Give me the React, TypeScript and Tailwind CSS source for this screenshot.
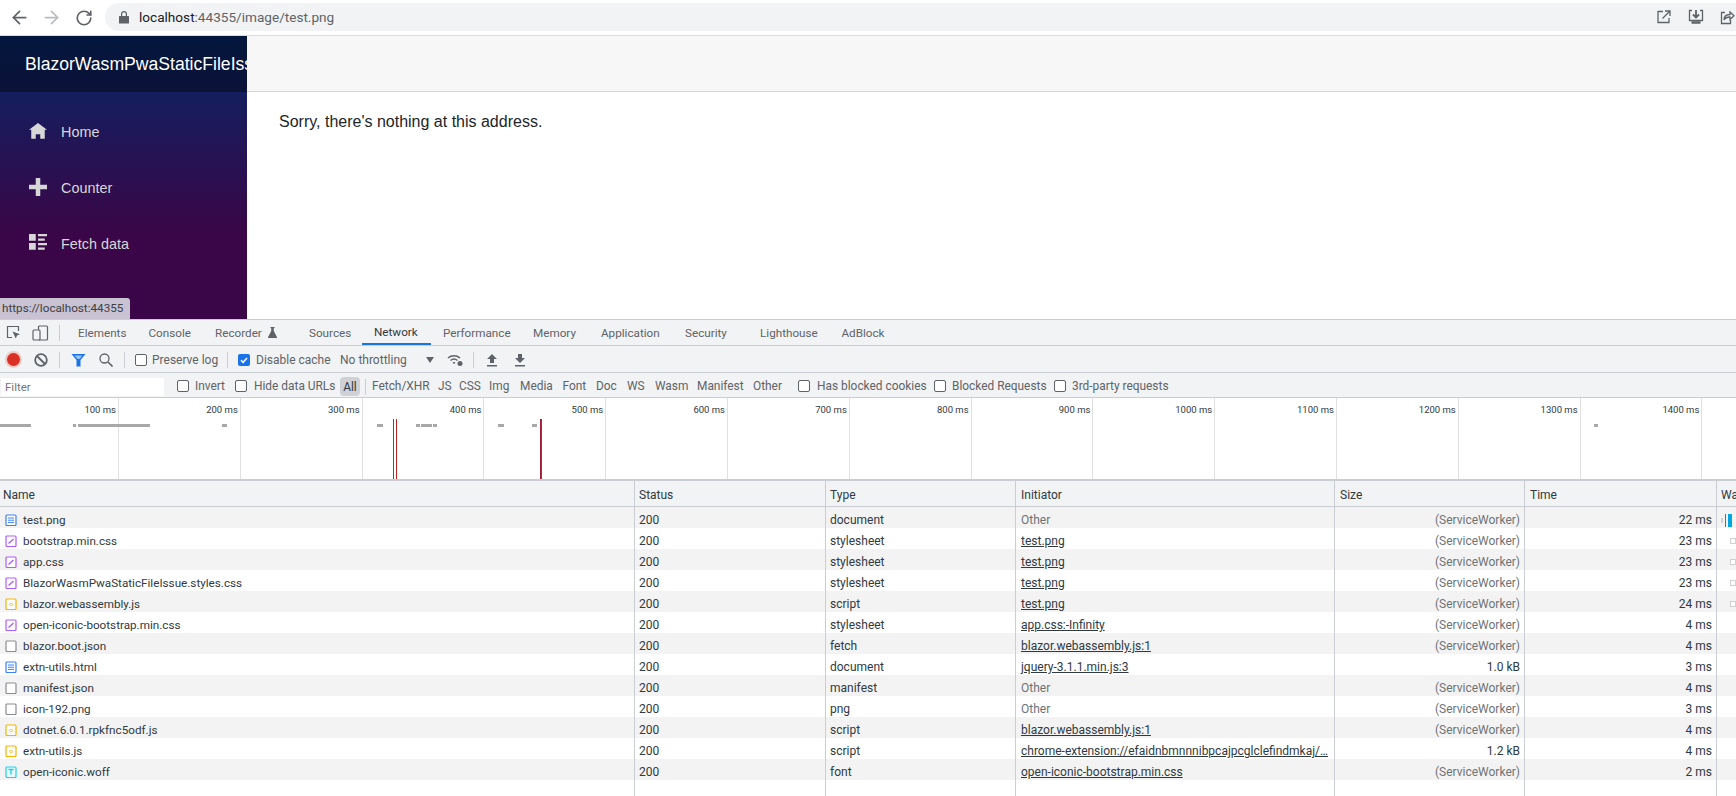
import { ArrowLeft, ArrowRight, RotateCw } from "lucide-react";

const UI_FONT = "font-['Roboto',sans-serif]";
const COLS = "grid grid-cols-[635px_191px_190px_319px_190px_192px_19px]";

type Kind = "doc" | "css" | "js" | "blank" | "font";

const REQUESTS: {
  name: string;
  kind: Kind;
  type: string;
  initiator: string;
  link: boolean;
  size: string;
  time: string;
}[] = [
  { name: "test.png", kind: "doc", type: "document", initiator: "Other", link: false, size: "(ServiceWorker)", time: "22 ms" },
  { name: "bootstrap.min.css", kind: "css", type: "stylesheet", initiator: "test.png", link: true, size: "(ServiceWorker)", time: "23 ms" },
  { name: "app.css", kind: "css", type: "stylesheet", initiator: "test.png", link: true, size: "(ServiceWorker)", time: "23 ms" },
  { name: "BlazorWasmPwaStaticFileIssue.styles.css", kind: "css", type: "stylesheet", initiator: "test.png", link: true, size: "(ServiceWorker)", time: "23 ms" },
  { name: "blazor.webassembly.js", kind: "js", type: "script", initiator: "test.png", link: true, size: "(ServiceWorker)", time: "24 ms" },
  { name: "open-iconic-bootstrap.min.css", kind: "css", type: "stylesheet", initiator: "app.css:-Infinity", link: true, size: "(ServiceWorker)", time: "4 ms" },
  { name: "blazor.boot.json", kind: "blank", type: "fetch", initiator: "blazor.webassembly.js:1", link: true, size: "(ServiceWorker)", time: "4 ms" },
  { name: "extn-utils.html", kind: "doc", type: "document", initiator: "jquery-3.1.1.min.js:3", link: true, size: "1.0 kB", time: "3 ms" },
  { name: "manifest.json", kind: "blank", type: "manifest", initiator: "Other", link: false, size: "(ServiceWorker)", time: "4 ms" },
  { name: "icon-192.png", kind: "blank", type: "png", initiator: "Other", link: false, size: "(ServiceWorker)", time: "3 ms" },
  { name: "dotnet.6.0.1.rpkfnc5odf.js", kind: "js", type: "script", initiator: "blazor.webassembly.js:1", link: true, size: "(ServiceWorker)", time: "4 ms" },
  { name: "extn-utils.js", kind: "js", type: "script", initiator: "chrome-extension://efaidnbmnnnibpcajpcglclefindmkaj/…", link: true, size: "1.2 kB", time: "4 ms" },
  { name: "open-iconic.woff", kind: "font", type: "font", initiator: "open-iconic-bootstrap.min.css", link: true, size: "(ServiceWorker)", time: "2 ms" },
];

const TABS = [
  { label: "Elements", width: "w-[70.500px]" },
  { label: "Console", width: "w-[66.500px]" },
  { label: "Recorder", width: "w-[94px]" },
  { label: "Sources", width: "w-[65px]" },
  { label: "Network", width: "w-[69px]" },
  { label: "Performance", width: "w-[90px]" },
  { label: "Memory", width: "w-[68px]" },
  { label: "Application", width: "w-[84px]" },
  { label: "Security", width: "w-[75px]" },
  { label: "Lighthouse", width: "w-[81.500px]" },
  { label: "AdBlock", width: "w-[80px]" },
];

const TICKS = ["100 ms", "200 ms", "300 ms", "400 ms", "500 ms", "600 ms", "700 ms", "800 ms", "900 ms", "1000 ms", "1100 ms", "1200 ms", "1300 ms", "1400 ms", ""];

function FileIcon({ kind }: { kind: Kind }) {
  const stroke = { doc: "#3b82f6", css: "#b45cf5", js: "#f5b400", blank: "#8a8d91", font: "#22cfe6" }[kind];
  return (
    <svg width="12" height="12" viewBox="0 0 12 12" className="shrink-0">
      <rect x="1" y="1" width="10" height="10.500" rx="1" fill={kind === "font" ? "#e6fafd" : "#fff"} stroke={stroke} strokeWidth="1.200" />
      {kind === "doc" && <path d="M3 4h6M3 6.200h6M3 8.400h6" stroke={stroke} />}
      {kind === "css" && <path d="M3.500 8.500l5-4.500" stroke={stroke} strokeWidth="1.400" />}
      {kind === "js" && <rect x="4.500" y="5.500" width="3" height="2" rx="1" fill="none" stroke={stroke} strokeWidth="0.800" />}
      {kind === "font" && <path d="M3.500 3.500h5M6 3.500v5" stroke={stroke} strokeWidth="1.400" />}
    </svg>
  );
}

function Check({ checked = false }: { checked?: boolean }) {
  if (checked) {
    return (
      <span className="w-3 h-3 rounded-[2px] bg-[#1a73e8] flex items-center justify-center shrink-0">
        <svg width="10" height="10" viewBox="0 0 10 10">
          <path d="M2 5.200l2.100 2.100L8 3" fill="none" stroke="#fff" strokeWidth="1.600" />
        </svg>
      </span>
    );
  }
  return <span className="w-3 h-3 rounded-[2px] border border-[#5f6368] bg-white shrink-0" />;
}

function Sep({ className }: { className: string }) {
  return (
    <span className={`flex justify-center shrink-0 ${className}`}>
      <span className="w-px h-4 bg-[#cacdd1]" />
    </span>
  );
}

function BrowserBar() {
  return (
    <div className="h-[36px] shrink-0 bg-white border-b border-[#dadce0] flex items-center">
      <div className="w-[105px] flex items-center shrink-0">
        <ArrowLeft size={21} strokeWidth={2} className="ml-[9px] text-[#5f6368]" />
        <ArrowRight size={21} strokeWidth={2} className="ml-[11px] text-[#babcbe]" />
        <RotateCw size={18} strokeWidth={2.200} className="ml-[13px] text-[#5f6368]" />
      </div>
      <div className="flex-1 h-[28px] mt-[-1px] rounded-l-full bg-[#f1f3f4] flex items-center">
        <svg width="12" height="14" viewBox="0 0 12 14" className="ml-[13px] text-[#5f6368]">
          <path d="M1.500 6h9a.5.5 0 0 1 .5.5V13a.5.5 0 0 1-.5.5h-9A.5.5 0 0 1 1 13V6.500A.5.5 0 0 1 1.500 6zM3 6V4a3 3 0 0 1 6 0v2H7.800V4a1.800 1.800 0 0 0-3.600 0v2z" fill="currentColor" />
        </svg>
        <span className={`ml-[9px] text-[13.600px] text-[#5f6368] ${UI_FONT}`}>
          <span className="text-[#202124]">localhost</span>:44355/image/test.png
        </span>
        <div className="ml-auto flex items-center text-[#5f6368]">
          <svg width="14" height="14" viewBox="0 0 14 14" fill="none" stroke="currentColor" strokeWidth="1.300">
            <path d="M6 1.500H1v11h11V8M5.500 8.500L12.500 1.500M8 1h5v5" />
          </svg>
          <svg width="16" height="16" viewBox="0 0 16 16" fill="none" stroke="currentColor" strokeWidth="1.300" className="ml-[17px]">
            <path d="M4 1.500H1.500v10h13v-10H12" />
            <path d="M8 1v7M5 5.500L8 8.500l3-3" strokeWidth="1.800" />
            <path d="M3.500 13.500h9" strokeWidth="2.500" />
          </svg>
          <svg width="15" height="15" viewBox="0 0 15 15" fill="none" stroke="currentColor" strokeWidth="1.300" className="ml-[16px] mr-[1px]">
            <path d="M5 2.500H1.500v11h9V10" />
            <path d="M4 10c0-4 3-5.500 6-5.500V2l4 3.800-4 3.700V7c-3 0-5 1-6 3z" />
          </svg>
        </div>
      </div>
    </div>
  );
}

function BlazorPage() {
  return (
    <div className="h-[283px] shrink-0 flex relative bg-white font-['Liberation_Sans',sans-serif]">
      <aside className="w-[247px] shrink-0 bg-[linear-gradient(180deg,#052767_0%,#3a0647_70%)] flex flex-col">
        <div className="h-[56px] shrink-0 bg-black/40 flex items-center pl-[25px] overflow-hidden whitespace-nowrap text-[17.600px] text-white">
          BlazorWasmPwaStaticFileIssue
        </div>
        <nav className="pt-[17px] flex flex-col text-[14.400px] text-[#d7d7d7]">
          <div className="h-[56px] flex items-center pl-[29px] pb-2">
            <svg width="18" height="18" viewBox="0 0 8 8" className="mt-[-3px]">
              <path d="M4 0l-4 3h1v4h2v-2h2v2h2v-4.030l1 .030-4-3z" fill="currentColor" />
            </svg>
            <span className="ml-[14px]">Home</span>
          </div>
          <div className="h-[56px] flex items-center pl-[29px] pb-2">
            <svg width="18" height="18" viewBox="0 0 8 8" className="mt-[-4px]">
              <path d="M3 0v3h-3v2h3v3h2v-3h3v-2h-3v-3h-2z" fill="currentColor" />
            </svg>
            <span className="ml-[14px]">Counter</span>
          </div>
          <div className="h-[56px] flex items-center pl-[29px] pb-2">
            <svg width="18" height="18" viewBox="0 0 8 8" className="mt-[-4px]">
              <path d="M0 0v3h3v-3h-3zm4 0v1h4v-1h-4zm0 2v1h3v-1h-3zm-4 2v3h3v-3h-3zm4 0v1h4v-1h-4zm0 2v1h3v-1h-3z" fill="currentColor" />
            </svg>
            <span className="ml-[14px]">Fetch data</span>
          </div>
        </nav>
      </aside>
      <main className="flex-1 flex flex-col">
        <div className="h-[56px] shrink-0 bg-[#f7f7f7] border-b border-[#d6d5d5]" />
        <p className="pl-[32px] pt-[18px] text-[16px] leading-6 text-[#212529]">Sorry, there's nothing at this address.</p>
      </main>
      <div className={`absolute left-0 bottom-0 h-[21px] w-[130px] rounded-tr-[3px] bg-[#c8c2d2] text-[#3c4043] text-[11.700px] leading-[21px] pl-[2px] ${UI_FONT}`}>
        https://localhost:44355
      </div>
    </div>
  );
}

function TabBar() {
  return (
    <div className="h-[27px] shrink-0 bg-[#f1f3f4] border-y border-[#cacdd1] flex items-stretch text-[11.700px] text-[#5f6368]">
      <div className="w-[66px] shrink-0 flex items-center">
        <svg width="15" height="15" viewBox="0 0 15 15" fill="none" stroke="#5f6368" strokeWidth="1.200" className="ml-[6px]">
          <path d="M6 12.500H1.500V1.500h11V6" />
          <path d="M6.500 6.500l7.500 2.800-3 1.200-1.200 3z" fill="#5f6368" stroke="none" />
        </svg>
        <svg width="17" height="16" viewBox="0 0 17 16" fill="none" stroke="#5f6368" strokeWidth="1.200" className="ml-[11px]">
          <rect x="6.500" y="1" width="9" height="14" rx="1" />
          <rect x="1" y="5" width="7" height="10" rx="1" fill="#f1f3f4" />
        </svg>
        <span className="ml-[10px] w-px h-4 bg-[#cacdd1]" />
      </div>
      {TABS.map((tab) => (
        <div
          key={tab.label}
          className={`${tab.width} shrink-0 pl-3 pt-[2px] flex items-center whitespace-nowrap ${
            tab.label === "Network" ? "border-b-2 border-[#1a73e8] text-[#303942]" : ""
          }`}
        >
          {tab.label}
          {tab.label === "Recorder" && (
            <svg width="9" height="11" viewBox="0 0 9 11" className="ml-[6px] mt-[-3px]">
              <path d="M2.500 0h4v1h-.7v3L9 10.200V11H0v-.8L3.200 4V1h-.7z" fill="#5f6368" />
            </svg>
          )}
        </div>
      ))}
    </div>
  );
}

function Toolbar() {
  return (
    <div className="h-[27px] shrink-0 bg-[#f1f3f4] border-b border-[#cacdd1] pt-px flex items-center text-[12px] text-[#5f6368]">
      <span className="w-[27px] shrink-0 flex justify-center">
        <span className="w-[13px] h-[13px] rounded-full bg-[#d93025] ring-2 ring-[#f0c8c4]" />
      </span>
      <span className="w-[28px] shrink-0 flex justify-center">
        <svg width="14" height="14" viewBox="0 0 14 14" fill="none" stroke="#5f6368" strokeWidth="1.800">
          <circle cx="7" cy="7" r="5.800" />
          <path d="M3 3l8 8" />
        </svg>
      </span>
      <Sep className="w-[9px]" />
      <span className="w-[28px] shrink-0 flex justify-center">
        <svg width="15" height="14" viewBox="0 0 15 14">
          <path d="M0.500 1h14L9.500 7v6.500h-4V7z" fill="#1a73e8" />
          <path d="M3.500 2.500h8L8.500 6h-2z" fill="#9cc3f5" />
        </svg>
      </span>
      <span className="w-[27px] shrink-0 flex justify-center">
        <svg width="14" height="14" viewBox="0 0 14 14" fill="none" stroke="#5f6368" strokeWidth="1.300">
          <circle cx="5.500" cy="5.500" r="4.500" />
          <path d="M9 9l4.500 4.500" strokeWidth="1.600" />
        </svg>
      </span>
      <Sep className="w-[10px]" />
      <label className="ml-[6px] w-[87px] shrink-0 flex items-center gap-[5px]">
        <Check />
        Preserve log
      </label>
      <Sep className="w-[10px]" />
      <label className="ml-[6px] w-[102px] shrink-0 flex items-center gap-[6px]">
        <Check checked />
        Disable cache
      </label>
      <span className="w-[84px] shrink-0">No throttling</span>
      <svg width="8" height="6" viewBox="0 0 8 6" className="ml-[2px] shrink-0">
        <path d="M0 0h8L4 6z" fill="#5f6368" />
      </svg>
      <svg width="17" height="14" viewBox="0 0 17 14" fill="none" stroke="#5f6368" strokeWidth="1.500" className="ml-[13px] shrink-0">
        <path d="M1 5a9 9 0 0 1 12 0M3.500 7.500a5.500 5.500 0 0 1 7 0M6 10a2 2 0 0 1 2 0" />
        <circle cx="13" cy="10.500" r="2.500" fill="#5f6368" stroke="none" />
      </svg>
      <Sep className="w-[19px]" />
      <svg width="12" height="14" viewBox="0 0 12 14" className="ml-[3px] shrink-0">
        <path d="M6 1l5 5H8v4H4V6H1zM1 12h10v1.500H1z" fill="#5f6368" />
      </svg>
      <svg width="12" height="14" viewBox="0 0 12 14" className="ml-[16px] shrink-0">
        <path d="M4 1h4v4h3l-5 5-5-5h3zM1 12h10v1.500H1z" fill="#5f6368" />
      </svg>
    </div>
  );
}

function FilterBar() {
  return (
    <div className="h-[25px] shrink-0 bg-[#f1f3f4] border-b border-[#cacdd1] pt-[3px] flex items-center text-[11.900px] text-[#5f6368]">
      <div className="ml-px w-[163px] h-[18px] shrink-0 bg-white pl-[4px] text-[11.500px] leading-[19px] text-[#757575]">Filter</div>
      <label className="ml-[13px] w-[58px] shrink-0 flex items-center gap-[6px]">
        <Check />
        Invert
      </label>
      <label className="w-[105px] shrink-0 flex items-center gap-[7px]">
        <Check />
        Hide data URLs
      </label>
      <span className="w-[20px] h-[19px] shrink-0 rounded-[4px] bg-[#cfd1d5] text-center leading-[20px] text-[#303942]">All</span>
      <Sep className="w-[11px]" />
      <span className="ml-[1px] w-[66px] shrink-0">Fetch/XHR</span>
      <span className="w-[21px] shrink-0">JS</span>
      <span className="w-[30px] shrink-0">CSS</span>
      <span className="w-[31px] shrink-0">Img</span>
      <span className="w-[42.500px] shrink-0">Media</span>
      <span className="w-[33.500px] shrink-0">Font</span>
      <span className="w-[31px] shrink-0">Doc</span>
      <span className="w-[28px] shrink-0">WS</span>
      <span className="w-[42px] shrink-0">Wasm</span>
      <span className="w-[56px] shrink-0">Manifest</span>
      <span className="w-[45px] shrink-0">Other</span>
      <label className="w-[136px] shrink-0 flex items-center gap-[7px]">
        <Check />
        Has blocked cookies
      </label>
      <label className="w-[120px] shrink-0 flex items-center gap-[6px]">
        <Check />
        Blocked Requests
      </label>
      <label className="shrink-0 flex items-center gap-[6px]">
        <Check />
        3rd-party requests
      </label>
    </div>
  );
}

function Timeline() {
  return (
    <div className={`h-[83px] shrink-0 bg-white border-b-[2px] border-[#cacdd1] relative flex overflow-hidden ${UI_FONT}`}>
      {TICKS.map((tick, i) => (
        <div
          key={tick || "end"}
          className={
            i === 0
              ? "w-[119px] shrink-0 border-r border-[#e0e0e0] text-right pr-[2px] pt-[5px] text-[9.500px] leading-[14px] text-[#303942]"
              : "w-[121.800px] shrink-0 border-r border-[#e0e0e0] text-right pr-[2px] pt-[5px] text-[9.500px] leading-[14px] text-[#303942]"
          }
        >
          {tick}
        </div>
      ))}
      <svg className="absolute inset-0 w-full h-full" aria-hidden="true">
        <g fill="#a8a8a8">
          <rect x="0" y="26" width="31" height="3" />
          <rect x="73" y="26" width="3" height="3" />
          <rect x="78" y="26" width="72" height="3" />
          <rect x="222" y="26" width="5" height="3" />
          <rect x="377" y="26" width="6" height="3" />
          <rect x="416" y="26" width="4" height="3" />
          <rect x="421" y="26" width="11" height="3" />
          <rect x="433" y="26" width="4" height="3" />
          <rect x="498" y="26" width="6" height="3" />
          <rect x="532" y="26" width="5" height="3" />
          <rect x="1594" y="26" width="4" height="3" />
        </g>
        <rect x="393" y="21" width="1" height="60" fill="#1a5fc4" />
        <rect x="396" y="21" width="1" height="60" fill="#c5221f" />
        <rect x="540" y="21" width="1" height="60" fill="#a11a3a" />
        <rect x="541" y="21" width="1" height="60" fill="#1a5fc4" />
      </svg>
    </div>
  );
}

function RequestTable() {
  const cellLine = "border-r border-[#cacdd1]";
  const bars = [1, 2, 3, 4];
  return (
    <div className="flex-1 min-h-0 bg-white flex flex-col text-[12px] text-[#303942]">
      <div className={`${COLS} h-[26px] shrink-0 bg-[#f1f3f4] border-b border-[#cacdd1] leading-[29px]`}>
        <div className={`${cellLine} pl-[3px]`}>Name</div>
        <div className={`${cellLine} pl-[4px]`}>Status</div>
        <div className={`${cellLine} pl-[4px]`}>Type</div>
        <div className={`${cellLine} pl-[5px]`}>Initiator</div>
        <div className={`${cellLine} pl-[5px]`}>Size</div>
        <div className={`${cellLine} pl-[5px]`}>Time</div>
        <div className="pl-[4px] overflow-hidden">Waterfall</div>
      </div>
      {REQUESTS.map((req, i) => (
        <div key={req.name} className={`${COLS} h-[21px] shrink-0 leading-[26px] ${i % 2 === 0 ? "bg-[#f3f3f3]" : "bg-white"}`}>
          <div className={`${cellLine} pl-[5px] flex items-center gap-[6px] text-[11.700px]`}>
            <FileIcon kind={req.kind} />
            <span>{req.name}</span>
          </div>
          <div className={`${cellLine} pl-[4px]`}>200</div>
          <div className={`${cellLine} pl-[4px]`}>{req.type}</div>
          <div className={`${cellLine} pl-[5px] whitespace-nowrap overflow-hidden`}>
            {req.link ? <span className="underline">{req.initiator}</span> : <span className="text-[#6e7378]">{req.initiator}</span>}
          </div>
          <div className={`${cellLine} pr-[4px] text-right ${req.size === "(ServiceWorker)" ? "text-[#6e7378]" : ""}`}>{req.size}</div>
          <div className={`${cellLine} pr-[4px] text-right`}>{req.time}</div>
          <div className="overflow-hidden">
            {i === 0 && (
              <div className="flex items-center h-full pl-[4px] gap-[2px]">
                <span className="w-[2px] h-[5px] bg-[#d0d0d0]" />
                <span className="w-[1px] h-[13px] bg-[#0f9d58]" />
                <span className="w-[4px] h-[13px] bg-[#00a6e0]" />
              </div>
            )}
            {bars.includes(i) && (
              <div className="flex items-center h-full pl-[13px]">
                <span className="w-[6px] h-[6px] border border-[#d0d0d0] bg-white" />
              </div>
            )}
          </div>
        </div>
      ))}
      <div className={`${COLS} flex-1`}>
        <div className={cellLine} />
        <div className={cellLine} />
        <div className={cellLine} />
        <div className={cellLine} />
        <div className={cellLine} />
        <div className={cellLine} />
        <div />
      </div>
    </div>
  );
}

export default function App() {
  return (
    <div className="w-[1736px] h-[796px] overflow-hidden flex flex-col bg-white">
      <BrowserBar />
      <BlazorPage />
      <div className={`flex-1 min-h-0 flex flex-col ${UI_FONT}`}>
        <TabBar />
        <Toolbar />
        <FilterBar />
        <Timeline />
        <RequestTable />
      </div>
    </div>
  );
}
